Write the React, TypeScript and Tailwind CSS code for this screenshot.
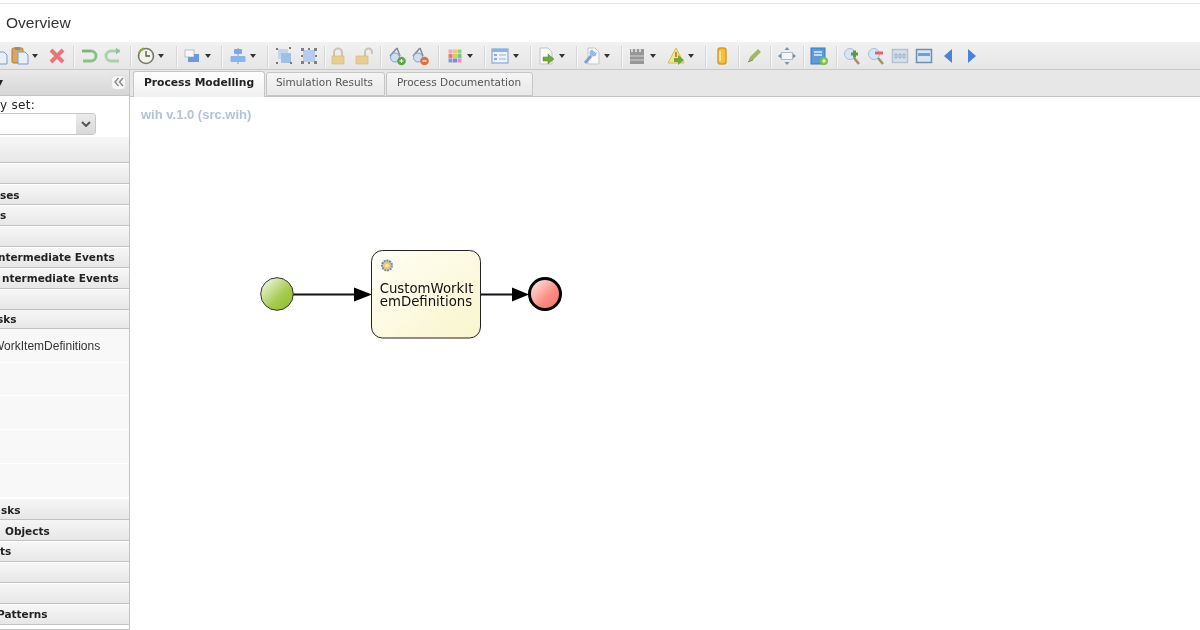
import React from "react";

const Btn = ({ className = "", children }: { className?: string; children: React.ReactNode }) => (
  <div className={`h-5 w-5 shrink-0 ${className}`}>
    <svg viewBox="0 0 20 20" className="h-5 w-5">{children}</svg>
  </div>
);

const Caret = ({ className = "" }: { className?: string }) => (
  <div className={`flex w-2 shrink-0 justify-center ${className}`}>
    <div className="h-0 w-0 border-x-[3.5px] border-t-[4px] border-x-transparent border-t-[#333]" />
  </div>
);

const Sep = ({ className = "" }: { className?: string }) => (
  <div className={`h-[21px] w-px shrink-0 bg-[#d6d6d6] shadow-[1px_0_0_#f8f8f8] ${className}`} />
);

const Paste = () => (
  <>
    <rect x="1" y="2" width="11" height="15" rx="1.5" fill="#d9a660" stroke="#a9783c" />
    <rect x="4" y="1" width="5" height="3" fill="#8d8d80" />
    <path d="M7 6h7l3 3v9H7z" fill="#e8effa" stroke="#7d9ccc" />
  </>
);

const Toolbar = () => (
  <div className="flex h-[28px] items-center overflow-hidden border-b border-[#c9c9c9] bg-gradient-to-b from-[#f1f1f1] to-[#e6e6e6] pt-px">
    <Btn className="-ml-[10px]"><path d="M7 6h7l3 3v9H7z" fill="#e8effa" stroke="#7d9ccc" /></Btn>
    <Btn className="ml-px"><Paste /></Btn>
    <Caret />
    <Btn className="ml-2"><path d="M4 4l12 12M16 4L4 16" stroke="#e8747c" strokeWidth="4" /></Btn>
    <Sep className="ml-[6px]" />
    <Btn className="ml-[5px]"><path d="M3 5h9a4.500 4.500 0 0 1 0 10H4" fill="none" stroke="#8cc084" strokeWidth="3" /><path d="M3 5h9" stroke="#6aa864" strokeWidth="1" /></Btn>
    <Btn className="ml-1"><path d="M17 5H8a4.500 4.500 0 0 0 0 10h8" fill="none" stroke="#a6d4a8" strokeWidth="3" /><path d="M13 1.500L17 5l-4 3.500z" fill="#8cc49a" /></Btn>
    <Sep className="ml-[7px]" />
    <Btn className="ml-[5px]">
      <circle cx="10" cy="10" r="7.500" fill="#f2f2ec" stroke="#77776c" strokeWidth="1.600" />
      <path d="M10 5v5h4" fill="none" stroke="#55554d" strokeWidth="1.300" />
      <path d="M3 7a7.500 7.500 0 0 1 5-4.500" fill="none" stroke="#7cae38" strokeWidth="2" />
    </Btn>
    <Caret className="ml-px" />
    <Sep className="ml-[11px]" />
    <Btn className="ml-[5px]">
      <rect x="3" y="4" width="9" height="7" fill="#f8f8f8" stroke="#aaa" strokeWidth="0.7" />
      <path d="M6 11h6V8h5v8H6z" fill="#6c9ade" />
    </Btn>
    <Caret className="ml-[2px]" />
    <Sep className="ml-[9px]" />
    <Btn className="ml-[6px]">
      <path d="M10 2v16" stroke="#7d9ccc" />
      <rect x="6" y="3" width="8" height="5" rx="1" fill="#7da8e4" />
      <rect x="2.500" y="10" width="15" height="6" rx="1" fill="#8bb2ea" />
    </Btn>
    <Caret className="ml-px" />
    <Sep className="ml-[10px]" />
    <Btn className="ml-[6px]">
      <rect x="4" y="3" width="10" height="10" fill="#c4d6ee" />
      <rect x="7" y="7" width="10" height="10" fill="#a0bee6" />
      <path d="M2 2h2v2H2zM15 1h2v2h-2zM2 16h2v2H2zM16 16h2v2h-2z" fill="#777" />
    </Btn>
    <Btn className="ml-[5px]">
      <rect x="4" y="4" width="12" height="12" fill="#b4ccee" />
      <path d="M2 2h3v3H2zM9 2h2v2H9zM15 2h3v3h-3zM2 9h2v2H2zM16 9h2v2h-2zM2 15h3v3H2zM9 16h2v2H9zM15 15h3v3h-3z" fill="#808080" />
    </Btn>
    <Sep className="ml-[5px]" />
    <Btn className="ml-[3px]">
      <path d="M6 10V6.500a4 4 0 0 1 8 0V10" fill="none" stroke="#c9c5b4" strokeWidth="2" />
      <rect x="4" y="10" width="12" height="8" fill="#e6cd90" stroke="#d6b56e" strokeWidth="0.6" />
    </Btn>
    <Btn className="ml-[6px]">
      <path d="M11 10V6a3.500 3.500 0 0 1 7 0v2" fill="none" stroke="#c9c5b4" strokeWidth="2" />
      <rect x="2" y="10" width="12" height="8" fill="#e6cd90" stroke="#d6b56e" strokeWidth="0.6" />
    </Btn>
    <Sep className="ml-[6px]" />
    <Btn className="ml-[6px]">
      <path d="M3 10L10 2M10 2l3 8" fill="none" stroke="#7f8a96" strokeWidth="1.500" />
      <circle cx="8" cy="11.500" r="4.500" fill="#cfdff2" stroke="#7d9ccc" />
      <circle cx="14.500" cy="15" r="4.300" fill="#57a83c" />
      <path d="M12.500 15h4M14.500 13v4" stroke="#fff" strokeWidth="1.200" />
    </Btn>
    <Btn className="ml-[3px]">
      <path d="M3 10L10 2M10 2l3 8" fill="none" stroke="#7f8a96" strokeWidth="1.500" />
      <circle cx="8" cy="11.500" r="4.500" fill="#cfdff2" stroke="#7d9ccc" />
      <circle cx="14.500" cy="15" r="4.300" fill="#e0703c" />
      <path d="M12.500 15h4" stroke="#fff" strokeWidth="1.200" />
    </Btn>
    <Sep className="ml-2" />
    <Btn className="ml-[6px]">
      <path d="M3.500 3.500h4v4h-4z" fill="#f4a8c0" /><path d="M8 3.500h4v4H8z" fill="#f4c96c" /><path d="M12.500 3.500h4v4h-4z" fill="#9ad27a" />
      <path d="M3.500 8h4v4h-4z" fill="#ec7a6c" /><path d="M8 8h4v4H8z" fill="#bcd85e" /><path d="M12.500 8h4v4h-4z" fill="#78c296" />
      <path d="M3.500 12.500h4v4h-4z" fill="#7c9cd6" /><path d="M8 12.500h4v4H8z" fill="#8a88ca" /><path d="M12.500 12.500h4v4h-4z" fill="#f08dc0" />
    </Btn>
    <Caret className="ml-px" />
    <Sep className="ml-[10px]" />
    <Btn className="ml-[5px]">
      <rect x="2" y="3" width="16" height="14" fill="#eef3fa" stroke="#86aadb" strokeWidth="1.200" />
      <rect x="2" y="3" width="16" height="3" fill="#8fb2e2" />
      <path d="M4 9h3M4 13h3" stroke="#6c94cc" strokeWidth="1.500" />
      <path d="M9 9h7M9 13h7" stroke="#b4c8e2" strokeWidth="1.500" />
    </Btn>
    <Caret className="ml-[2px]" />
    <Sep className="ml-[10px]" />
    <Btn className="ml-[5px]">
      <path d="M4 2h8l4 4v12H4z" fill="#fafafa" stroke="#c4c4c4" />
      <path d="M7 11h5V8l6 5-6 5v-3H7z" fill="#6fa83c" stroke="#578a2c" strokeWidth="0.5" />
    </Btn>
    <Caret className="ml-[2px]" />
    <Sep className="ml-[10px]" />
    <Btn className="ml-[5px]">
      <path d="M6 2h7l4 4v12H6z" fill="#fafafa" stroke="#c4c4c4" />
      <path d="M3 17l6-7" stroke="#7ca2d6" strokeWidth="3" />
      <circle cx="11" cy="7" r="3.500" fill="#9abae4" />
      <path d="M11 3l3 3" stroke="#fafafa" strokeWidth="2" />
    </Btn>
    <Caret className="ml-px" />
    <Sep className="ml-[10px]" />
    <Btn className="ml-[5px]">
      <rect x="3" y="3" width="14" height="15" fill="#979797" />
      <path d="M5 3v3M9 3v3M13 3v3" stroke="#eee" strokeWidth="1.500" />
      <path d="M3 10h14M3 14h14" stroke="#d4d4d4" strokeWidth="1.200" />
    </Btn>
    <Caret className="ml-[2px]" />
    <Btn className="ml-[9px]">
      <path d="M10 2l8 15H2z" fill="#f6e39a" stroke="#e0b84c" />
      <path d="M9 6h2v5H9z" fill="#c88a28" />
      <path d="M8 12h4V9l6 5-6 5v-3H8z" fill="#6fa83c" />
    </Btn>
    <Caret className="ml-px" />
    <Sep className="ml-[10px]" />
    <Btn className="ml-[6px]">
      <rect x="6" y="2" width="8" height="16" rx="2.500" fill="#f2c23e" stroke="#d39a32" strokeWidth="1.500" />
      <path d="M8 5v10" stroke="#f8e28c" strokeWidth="2" />
    </Btn>
    <Sep className="ml-[6px]" />
    <Btn className="ml-[5px]">
      <path d="M4 16l2-5 8-8 3 3-8 8z" fill="#a3b662" />
      <path d="M4 16l5-2" stroke="#7d8f48" />
    </Btn>
    <Sep className="ml-[6px]" />
    <Btn className="ml-[6px]">
      <rect x="4.500" y="6.500" width="11" height="7" fill="#f4f4f4" stroke="#b4b8c4" />
      <path d="M10 1l2.500 3h-5zM10 19l2.500-3h-5zM1 10l3-2.500v5zM19 10l-3-2.500v5z" fill="#7890b8" />
    </Btn>
    <Sep className="ml-[6px]" />
    <Btn className="ml-[5px]">
      <rect x="2" y="2" width="14" height="16" fill="#5b9bd8" stroke="#3f78b8" />
      <path d="M5 6h8M5 9h8" stroke="#e4effa" strokeWidth="1.500" />
      <circle cx="15" cy="15" r="4" fill="#7cc43c" />
      <path d="M13 15h4M15 13v4" stroke="#fff" strokeWidth="1.200" />
    </Btn>
    <Sep className="ml-[7px]" />
    <Btn className="ml-[5px]">
      <circle cx="8" cy="8" r="5.500" fill="#d6e6f6" stroke="#a4c0dc" />
      <path d="M12 12l5 6" stroke="#a88a64" strokeWidth="2.500" />
      <path d="M9 8h7M12.500 4.500v7" stroke="#5a9a48" strokeWidth="3" />
    </Btn>
    <Btn className="ml-1">
      <circle cx="8" cy="8" r="5.500" fill="#d6e6f6" stroke="#a4c0dc" />
      <path d="M12 12l5 6" stroke="#a88a64" strokeWidth="2.500" />
      <path d="M9 7h8" stroke="#e8606c" strokeWidth="3" />
    </Btn>
    <Btn className="ml-1">
      <rect x="2.500" y="3.500" width="15" height="13" fill="#d6dfea" stroke="#b4c2d6" strokeWidth="1.500" />
      <path d="M5 8h2v4H5zM9 8h2v4H9zM13 8h2v4h-2z" fill="none" stroke="#9cb0cc" />
    </Btn>
    <Btn className="ml-1">
      <rect x="2.500" y="3.500" width="15" height="13" fill="#d8e6f4" stroke="#6f8cb4" strokeWidth="1.500" />
      <path d="M4 7h12v3H4z" fill="#6aa0dc" />
    </Btn>
    <Btn className="ml-1"><path d="M14 3v14L6 10z" fill="#4a82d8" /></Btn>
    <Btn className="ml-1"><path d="M6 3v14l8-7z" fill="#4a82d8" /></Btn>
  </div>
);

const rowFace = "bg-gradient-to-b from-[#f6f6f6] to-[#e7e7e7] border-b border-[#c2c2c2]";
const headFont = "font-['DejaVu_Sans',sans-serif] text-[10.5px] font-bold text-[#222]";

const Row = ({ className = "", label }: { className?: string; label?: string }) => (
  <div className={`flex items-center overflow-hidden whitespace-nowrap ${rowFace} ${headFont} ${className}`}>{label}</div>
);

const Item = ({ label }: { label?: string }) => (
  <div className="flex h-[34px] items-center border-b border-white bg-[#f8f8f8] pt-px font-['Liberation_Sans',sans-serif] text-[12px] text-[#333]">
    {label && <span className="-ml-[7px]">{label}</span>}
  </div>
);

const Sidebar = () => (
  <div className="flex w-[130px] shrink-0 flex-col overflow-hidden border-r border-[#c4c4c4] bg-white">
    <div className="flex h-[26px] items-center justify-between border-b border-[#c4c4c4] bg-gradient-to-b from-[#e9e9e9] to-[#d6d6d6] pr-[3px]">
      <span className="-ml-[3px] font-['DejaVu_Sans',sans-serif] text-[12px] font-bold text-[#222]">▾</span>
      <div className="flex h-[15px] w-[15px] items-center justify-center rounded-sm border border-[#ddd] bg-[#f6f6f6]">
        <svg viewBox="0 0 12 10" className="h-[10px] w-[12px]"><path d="M5.500 1L2 5l3.500 4M10 1L6.500 5 10 9" fill="none" stroke="#888" strokeWidth="1.400" /></svg>
      </div>
    </div>
    <div className="h-[41px] pt-[2px]">
      <div className="h-[15px] font-['DejaVu_Sans',sans-serif] text-[12px] leading-[15px] tracking-wide text-[#222]">y set:</div>
      <div className="flex h-[22px] w-[96px] overflow-hidden rounded-r-sm border border-l-0 border-[#c6c6c6] bg-white">
        <div className="flex-1" />
        <div className="flex w-[19px] items-center justify-center bg-gradient-to-b from-[#ececec] to-[#d8d8d8]">
          <svg viewBox="0 0 10 6" className="h-[6px] w-[10px]"><path d="M1 1l4 4 4-4" fill="none" stroke="#555" strokeWidth="2" /></svg>
        </div>
      </div>
    </div>
    <Row className="h-[26px]" />
    <Row className="mt-px h-[20px]" />
    <Row className="mt-px h-[20px] pt-[3px]" label="ses" />
    <Row className="mt-px h-[20px] pt-[2px]" label="s" />
    <Row className="mt-px h-[20px]" />
    <Row className="mt-px h-[20px] pt-[2px] -indent-[2px]" label="ntermediate Events" />
    <Row className="mt-px h-[20px] pt-[2px] indent-[2px]" label="ntermediate Events" />
    <Row className="mt-px h-[20px]" />
    <Row className="h-[19px] pt-[3px] -indent-[3px]" label="sks" />
    <Item label="WorkItemDefinitions" />
    <Item />
    <Item />
    <Item />
    <Item />
    <Row className="mt-px h-[21px] pt-[4px] indent-[1px]" label="sks" />
    <Row className="h-[21px] pt-[4px] indent-[5px]" label="Objects" />
    <Row className="mt-px h-[20px]" label="ts" />
    <Row className="mt-px h-[20px]" />
    <Row className="mt-px h-[20px]" />
    <Row className="mt-px h-[20px] -indent-[3px]" label="Patterns" />
    <div className="h-[5px] border-b border-[#c4c4c4]" />
  </div>
);

const Tabs = () => (
  <div className="flex h-[27px] items-end border-b border-[#c6c6c6] bg-[#e7e7e7] pl-[3px] font-['DejaVu_Sans',sans-serif] text-[10.5px]">
    <div className="-mb-px flex h-[26px] w-[132px] items-center justify-center rounded-t-[3px] border border-b-0 border-[#c6c6c6] bg-gradient-to-b from-white to-[#f0f0f0] pb-[3px] text-[10.75px] font-bold text-[#222]">Process Modelling</div>
    <div className="ml-px flex h-[24px] w-[119px] items-center justify-center rounded-t-[3px] border border-[#c6c6c6] bg-gradient-to-b from-[#f5f5f5] to-[#e9e9e9] pb-[2px] pr-[2px] text-[#555]">Simulation Results</div>
    <div className="ml-px flex h-[24px] w-[147px] items-center justify-center rounded-t-[3px] border border-[#c6c6c6] bg-gradient-to-b from-[#f5f5f5] to-[#e9e9e9] pb-[2px] pr-px text-[#555]">Process Documentation</div>
  </div>
);

const Canvas = () => (
  <div className="relative flex-1 bg-white">
    <div className="pl-[11px] pt-[11px] font-['Liberation_Sans',sans-serif] text-[13px] font-bold leading-[14px] text-[#b3c3da]">wih v.1.0 (src.wih)</div>
    {/* diagram nodes sit on a free canvas */}
    <svg className="absolute left-[120px] top-[140px]" width="320" height="110" viewBox="250 237 320 110">
      <defs>
        <linearGradient id="startFill" x1="0.1" y1="0.1" x2="0.9" y2="0.9">
          <stop offset="0" stopColor="#eef4dc" />
          <stop offset="0.6" stopColor="#a6cc50" />
          <stop offset="1" stopColor="#94bf34" />
        </linearGradient>
        <linearGradient id="endFill" x1="0.1" y1="0.1" x2="0.9" y2="0.9">
          <stop offset="0" stopColor="#ffe4e0" />
          <stop offset="0.6" stopColor="#fa8f86" />
          <stop offset="1" stopColor="#f5766c" />
        </linearGradient>
        <linearGradient id="taskFill" x1="0" y1="0" x2="1" y2="1">
          <stop offset="0" stopColor="#fffff6" />
          <stop offset="1" stopColor="#f9f5cc" />
        </linearGradient>
      </defs>
      <path d="M293 294.500H356" stroke="#111" strokeWidth="2" />
      <path d="M354 287.500l18 7-18 7z" fill="#000" />
      <path d="M481 294.500H514" stroke="#111" strokeWidth="2" />
      <path d="M512 287.500l17 7-17 7z" fill="#000" />
      <circle cx="277" cy="294" r="16.300" fill="url(#startFill)" stroke="#333" strokeWidth="1" />
      <circle cx="545" cy="294" r="15.500" fill="url(#endFill)" stroke="#000" strokeWidth="3" />
      <rect x="371.500" y="250.500" width="109" height="87.500" rx="11" fill="url(#taskFill)" stroke="#222" strokeWidth="1" />
      <circle cx="387" cy="265.500" r="5" fill="#f4c46a" stroke="#5f8fd0" strokeWidth="2" strokeDasharray="2 0.8" />
      <circle cx="387" cy="265.500" r="1.800" fill="#f6e8b0" />
      <text x="426.500" y="293" textAnchor="middle" fontFamily="'DejaVu Sans', sans-serif" fontSize="13.300" fill="#111">CustomWorkIt</text>
      <text x="426" y="306" textAnchor="middle" fontFamily="'DejaVu Sans', sans-serif" fontSize="13.300" fill="#111">emDefinitions</text>
    </svg>
  </div>
);

export default function App() {
  return (
    <div className="flex h-[630px] w-[1200px] flex-col overflow-hidden bg-white blur-[0.4px]">
      <div className="h-[4px] border-b border-[#e2e2e2]" />
      <div className="flex h-[38px] items-center pl-[6px] font-['Liberation_Sans',sans-serif] text-[15.5px] text-[#333]">Overview</div>
      <Toolbar />
      <div className="flex flex-1 overflow-hidden">
        <Sidebar />
        <div className="flex flex-1 flex-col">
          <Tabs />
          <Canvas />
        </div>
      </div>
    </div>
  );
}
